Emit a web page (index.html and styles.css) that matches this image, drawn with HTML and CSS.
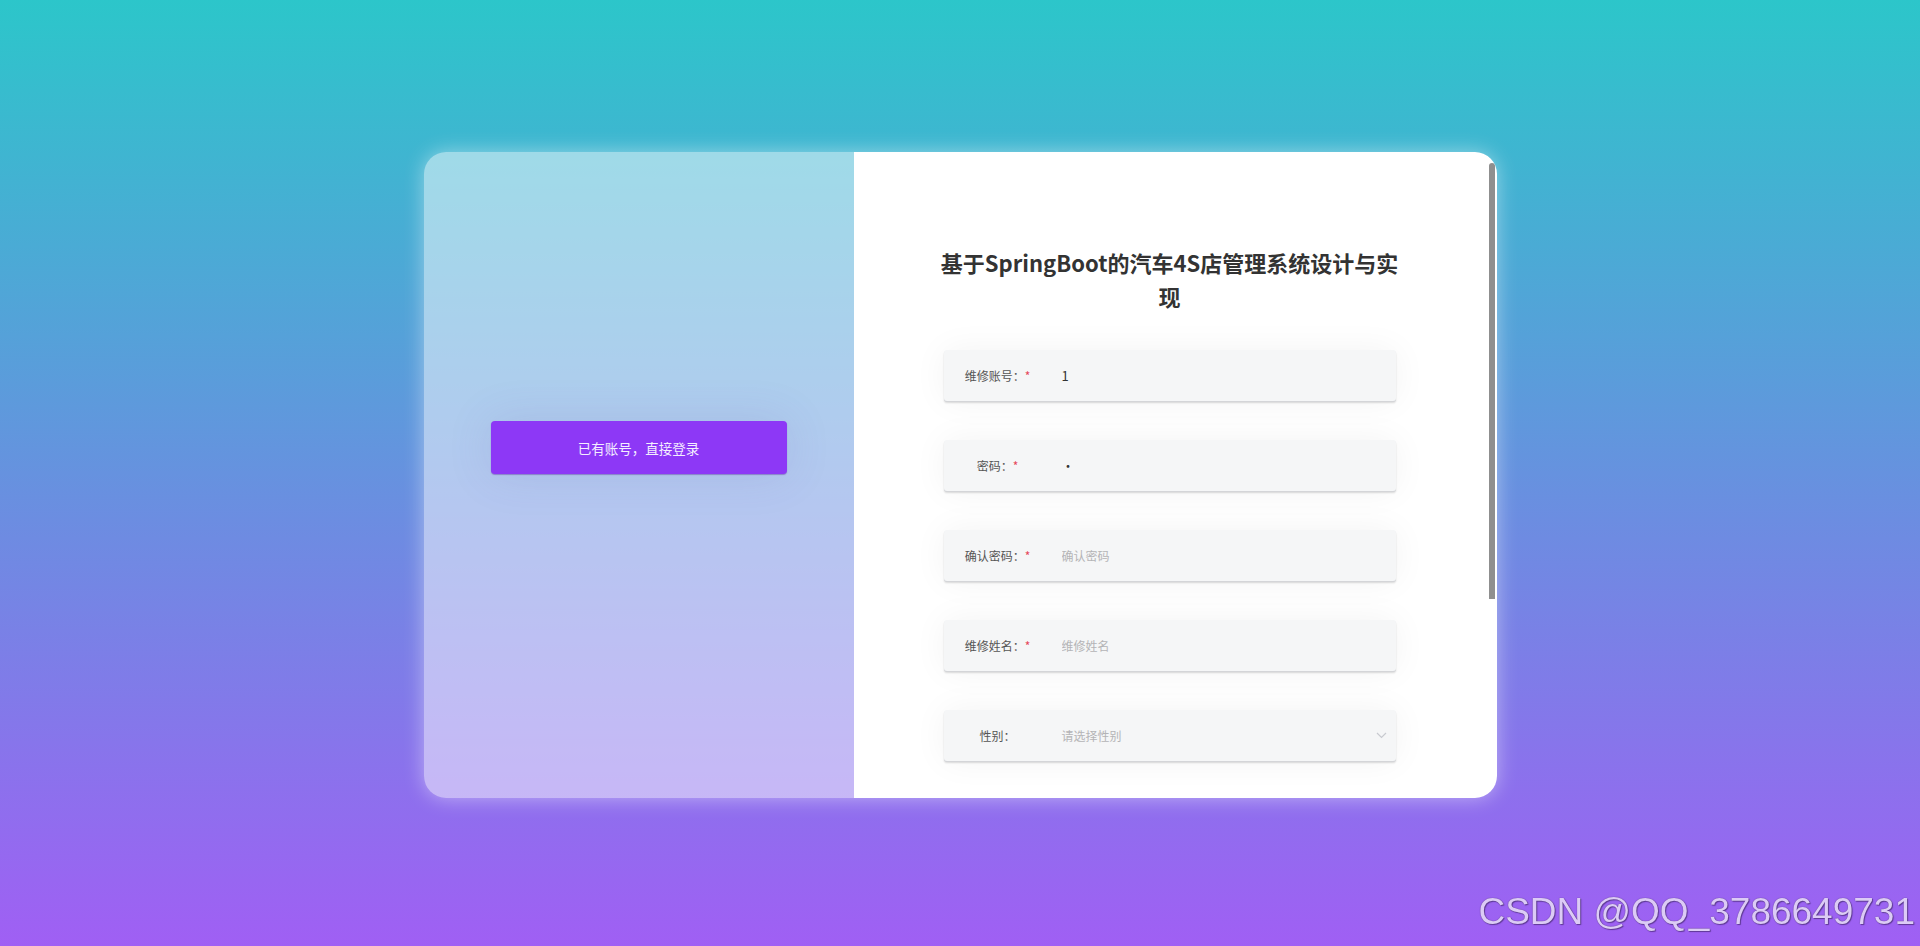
FILE: index.html
```html
<!DOCTYPE html>
<html lang="zh-CN">
<head>
<meta charset="utf-8">
<title>注册</title>
<link rel="stylesheet" href="styles.css">
</head>
<body>
<div class="page">
  <div class="card">
    <div class="side">
      <button class="to-login" type="button">已有账号，直接登录</button>
    </div>
    <div class="right">
      <div class="main">
        <h1 class="title">基于SpringBoot的汽车4S店管理系统设计与实现</h1>
        <form class="form">
          <div class="field">
            <label class="label">维修账号：<span class="req">*</span></label>
            <input class="input" type="text" value="1" placeholder="维修账号">
          </div>
          <div class="field">
            <label class="label">密码：<span class="req">*</span></label>
            <input class="input" type="password" value="1" placeholder="密码">
          </div>
          <div class="field">
            <label class="label">确认密码：<span class="req">*</span></label>
            <input class="input" type="password" placeholder="确认密码">
          </div>
          <div class="field">
            <label class="label">维修姓名：<span class="req">*</span></label>
            <input class="input" type="text" placeholder="维修姓名">
          </div>
          <div class="field">
            <label class="label">性别：</label>
            <div class="select">
              <span class="select-ph">请选择性别</span>
              <svg class="chev" width="11" height="7" viewBox="0 0 11 7"><path d="M1 1 L5.5 5.5 L10 1" fill="none" stroke="#c8cad0" stroke-width="1.2"/></svg>
            </div>
          </div>
        </form>
      </div>
      <div class="scroll-thumb"></div>
    </div>
  </div>
</div>
<div class="watermark">CSDN @QQ_3786649731</div>
</body>
</html>
```

FILE: styles.css
```css
html, body {
  margin: 0;
  padding: 0;
}

body {
  height: 946px;
  overflow: hidden;
  font-family: "Noto Sans CJK SC", "Noto Sans", sans-serif;
  background: linear-gradient(to bottom, #2cc6ca 0%, #6692df 50%, #a05ff4 100%);
}

.page {
  height: 946px;
  box-sizing: border-box;
  padding-top: 4px;
  display: flex;
  align-items: center;
  justify-content: center;
}

.card {
  width: 1073px;
  height: 646px;
  display: flex;
  border-radius: 22px;
  overflow: hidden;
  box-shadow: 0 0 20px rgba(255, 255, 255, 0.45);
}

.side {
  width: 430px;
  flex: none;
  box-sizing: border-box;
  padding-bottom: 55px;
  background: rgba(255, 255, 255, 0.5);
  display: flex;
  align-items: center;
  justify-content: center;
}

.to-login {
  width: 296px;
  height: 53px;
  border: none;
  border-radius: 4px;
  background: #8d38f6;
  color: #f4eeff;
  font-family: "Noto Sans CJK SC", sans-serif;
  font-size: 13.5px;
  box-shadow: 0 1px 1px rgba(70, 10, 140, 0.35), 0 0 46px rgba(90, 80, 170, 0.13);
  cursor: pointer;
}

.right {
  flex: 1;
  position: relative;
  background: #fff;
}

.main {
  height: 100%;
  overflow-y: auto;
  box-sizing: border-box;
  padding: 93px 0 0;
  scrollbar-width: none;
}

.main::-webkit-scrollbar {
  display: none;
}

.form {
  width: 452px;
  margin: 0 0 0 90px;
  padding-bottom: 180px;
}

.scroll-thumb {
  position: absolute;
  top: 11px;
  right: 2px;
  width: 6px;
  height: 436px;
  border-radius: 3px 3px 0 0;
  background: #8f8f8f;
}

.title {
  width: 466px;
  margin: 0 0 37px 83px;
  font-size: 22px;
  line-height: 34px;
  font-weight: bold;
  color: #333;
  text-align: center;
}

.field {
  height: 51px;
  margin-bottom: 39px;
  display: flex;
  align-items: center;
  background: #f5f6f7;
  border-radius: 3px;
  box-shadow: 0 1px 0 #d4d5d8, 0 2px 2px rgba(0, 0, 0, 0.14), 0 0 34px rgba(0, 0, 0, 0.05);
}

.label {
  width: 108px;
  flex: none;
  text-align: center;
  font-size: 12px;
  color: #555;
}

.req {
  color: #e5475a;
}

.input {
  flex: 1;
  height: 100%;
  box-sizing: border-box;
  border: none;
  outline: none;
  background: transparent;
  padding: 0 0 0 10px;
  font-family: "Noto Sans CJK SC", sans-serif;
  font-size: 13px;
  color: #333;
}

.input::placeholder {
  color: #b4b4b6;
  font-size: 12px;
}

.select {
  flex: 1;
  display: flex;
  align-items: center;
  justify-content: space-between;
  padding: 0 9px 0 10px;
}

.select-ph {
  font-size: 12px;
  color: #b4b4b6;
}

.chev {
  display: block;
}

.watermark {
  position: fixed;
  right: 5px;
  bottom: 13px;
  font-family: "Liberation Sans", Arial, sans-serif;
  font-size: 37px;
  color: #dccbf6;
  text-shadow: 0 0 1px rgba(60, 40, 90, 0.9), 1px 1px 1px rgba(40, 20, 70, 0.5);
  white-space: nowrap;
}
```
